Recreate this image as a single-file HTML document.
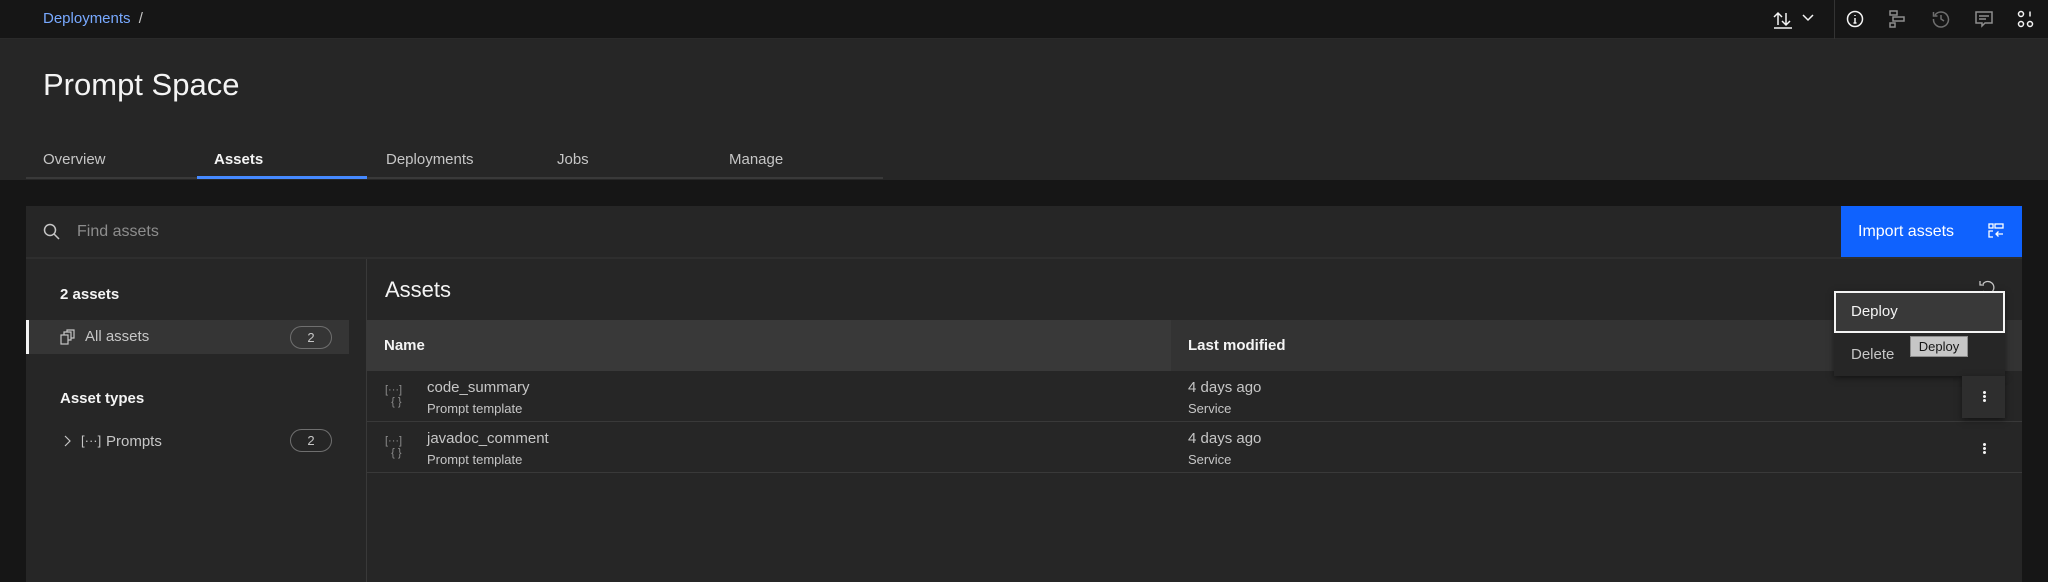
<!DOCTYPE html>
<html><head><meta charset="utf-8"><style>
*{box-sizing:border-box;margin:0;padding:0}
body{width:2048px;height:582px;background:#161616;font-family:"Liberation Sans",sans-serif;color:#f4f4f4;position:relative;overflow:hidden}
.a{position:absolute}
.ic{position:absolute;fill:none;stroke:#f4f4f4;stroke-width:1.5}
</style></head><body>
<div class="a" style="left:0;top:0;width:2048px;height:39px;background:#161616;border-bottom:1px solid #2a2a2a"></div>
<div class="a" style="left:43px;top:10px;font-size:15px;color:#78a9ff">Deployments <span style="color:#c6c6c6;margin-left:4px">/</span></div>
<div class="a" style="left:1834px;top:0;width:1px;height:39px;background:#333"></div>
<svg class="ic" style="left:1772px;top:10px" width="22" height="20" viewBox="0 0 22 20"><path d="M6 15V3M2 7l4-4 4 4M14 3v12M10 11l4 4 4-4M2 18h18"/></svg>
<svg class="ic" style="left:1802px;top:14px" width="12" height="8" viewBox="0 0 12 8"><path d="M1 1l5 5 5-5"/></svg>
<svg class="ic" style="left:1846px;top:10px" width="18" height="18" viewBox="0 0 18 18"><circle cx="9" cy="9" r="7.5"/><path d="M9 8v5M7.5 13h3M9 5v1"/></svg>
<svg class="ic" style="left:1889px;top:10px;stroke:#8d8d8d" width="18" height="18" viewBox="0 0 18 18"><rect x="1" y="1" width="7" height="4"/><rect x="4" y="7" width="11" height="4"/><rect x="1" y="13" width="5" height="4"/></svg>
<svg class="ic" style="left:1932px;top:10px;stroke:#6f6f6f" width="18" height="18" viewBox="0 0 18 18"><path d="M3 5A7.5 7.5 0 1 1 1.5 9M1.5 2v4h4M9 5v4l3 2"/></svg>
<svg class="ic" style="left:1975px;top:10px;stroke:#8d8d8d" width="18" height="18" viewBox="0 0 18 18"><path d="M1 2h16v11h-7l-3 3v-3H1zM4 6h10M4 9h7"/></svg>
<svg class="ic" style="left:2017px;top:10px" width="18" height="18" viewBox="0 0 18 18"><circle cx="4" cy="4" r="2.5"/><path d="M13 1.5v5"/><circle cx="4" cy="14" r="2.5"/><circle cx="13" cy="14" r="2.5"/></svg>

<div class="a" style="left:0;top:39px;width:2048px;height:141px;background:#262626"></div>
<div class="a" style="left:43px;top:67px;font-size:31px;color:#f4f4f4">Prompt Space</div>
<div class="a" style="left:26px;top:177px;width:857px;height:2px;background:#393939"></div>
<div class="a" style="left:197px;top:176px;width:170px;height:3px;background:#4589ff"></div>
<div class="a" style="left:43px;top:151px;font-size:15px;color:#c6c6c6">Overview</div>
<div class="a" style="left:214px;top:151px;font-size:15px;font-weight:bold">Assets</div>
<div class="a" style="left:386px;top:151px;font-size:15px;color:#c6c6c6">Deployments</div>
<div class="a" style="left:557px;top:151px;font-size:15px;color:#c6c6c6">Jobs</div>
<div class="a" style="left:729px;top:151px;font-size:15px;color:#c6c6c6">Manage</div>

<div class="a" style="left:26px;top:206px;width:1996px;height:376px;background:#262626"></div>
<div class="a" style="left:26px;top:257px;width:1996px;height:2px;background:#2e2e2e"></div>
<svg class="ic" style="left:43px;top:223px;stroke:#c6c6c6" width="18" height="18" viewBox="0 0 18 18"><circle cx="7" cy="7" r="5.5"/><path d="M11 11l5 5"/></svg>
<div class="a" style="left:77px;top:223px;font-size:16px;color:#8d8d8d">Find assets</div>
<div class="a" style="left:1841px;top:206px;width:181px;height:51px;background:#0f62fe"></div>
<div class="a" style="left:1858px;top:223px;font-size:16px;color:#fff">Import assets</div>
<svg class="ic" style="left:1988px;top:223px;stroke:#fff;stroke-width:1.3" width="16" height="16" viewBox="0 0 16 16"><rect x="1" y="1" width="4" height="4"/><rect x="7" y="1" width="8" height="4"/><path d="M5 8H1v6h4M15 11H8M10.5 8.5L8 11l2.5 2.5"/></svg>

<div class="a" style="left:366px;top:259px;width:1px;height:323px;background:#393939"></div>
<div class="a" style="left:60px;top:286px;font-size:15px;font-weight:bold">2 assets</div>
<div class="a" style="left:26px;top:320px;width:323px;height:34px;background:#353535;border-left:3px solid #f4f4f4"></div>
<svg class="ic" style="left:60px;top:329px;stroke:#c6c6c6;stroke-width:1.2" width="15" height="16" viewBox="0 0 15 16"><rect x="1" y="6" width="7" height="9"/><path d="M4 6V3h7v8H8M7 3V1h7v8h-3"/></svg>
<div class="a" style="left:85px;top:328px;font-size:15px;color:#c6c6c6">All assets</div>
<div class="a" style="left:290px;top:326px;width:42px;height:23px;border:1px solid #6f6f6f;border-radius:12px;font-size:13px;color:#c6c6c6;text-align:center;line-height:21px">2</div>
<div class="a" style="left:60px;top:390px;font-size:15px;font-weight:bold">Asset types</div>
<svg class="ic" style="left:63px;top:435px;stroke:#c6c6c6;stroke-width:1.2" width="8" height="12" viewBox="0 0 8 12"><path d="M2 1l5 5-5 5"/></svg>
<div class="a" style="left:81px;top:433px;font-size:13px;color:#c6c6c6">[···]</div>
<div class="a" style="left:106px;top:433px;font-size:15px;color:#c6c6c6">Prompts</div>
<div class="a" style="left:290px;top:429px;width:42px;height:23px;border:1px solid #6f6f6f;border-radius:12px;font-size:13px;color:#c6c6c6;text-align:center;line-height:21px">2</div>

<div class="a" style="left:385px;top:277px;font-size:22px">Assets</div>
<svg class="ic" style="left:1979px;top:280px;stroke:#c6c6c6;stroke-width:1.3" width="16" height="14" viewBox="0 0 16 14"><path d="M4 4a6 6 0 1 1 0 7M1 1v4h4"/></svg>
<div class="a" style="left:367px;top:320px;width:804px;height:51px;background:#393939"></div>
<div class="a" style="left:1171px;top:320px;width:851px;height:51px;background:#333"></div>
<div class="a" style="left:384px;top:337px;font-size:15px;font-weight:bold">Name</div>
<div class="a" style="left:1188px;top:337px;font-size:15px;font-weight:bold">Last modified</div>
<div class="a" style="left:367px;top:421px;width:1655px;height:1px;background:#393939"></div>
<div class="a" style="left:367px;top:472px;width:1655px;height:1px;background:#393939"></div>

<div class="a" style="left:385px;top:384px;font-size:11px;color:#8d8d8d;line-height:12px">[···]<br>&nbsp;&nbsp;{ }</div>
<div class="a" style="left:427px;top:379px;font-size:15px;color:#c6c6c6">code_summary</div>
<div class="a" style="left:427px;top:401px;font-size:13px;color:#c6c6c6">Prompt template</div>
<div class="a" style="left:1188px;top:379px;font-size:15px;color:#c6c6c6">4 days ago</div>
<div class="a" style="left:1188px;top:401px;font-size:13px;color:#c6c6c6">Service</div>

<div class="a" style="left:385px;top:435px;font-size:11px;color:#8d8d8d;line-height:12px">[···]<br>&nbsp;&nbsp;{ }</div>
<div class="a" style="left:427px;top:430px;font-size:15px;color:#c6c6c6">javadoc_comment</div>
<div class="a" style="left:427px;top:452px;font-size:13px;color:#c6c6c6">Prompt template</div>
<div class="a" style="left:1188px;top:430px;font-size:15px;color:#c6c6c6">4 days ago</div>
<div class="a" style="left:1188px;top:452px;font-size:13px;color:#c6c6c6">Service</div>

<div class="a" style="left:1834px;top:291px;width:171px;height:85px;background:#262626;box-shadow:0 2px 6px rgba(0,0,0,.5)"></div>
<div class="a" style="left:1834px;top:291px;width:171px;height:42px;background:#393939;border:2px solid #f4f4f4"></div>
<div class="a" style="left:1851px;top:303px;font-size:15px;color:#f4f4f4">Deploy</div>
<div class="a" style="left:1851px;top:346px;font-size:15px;color:#c6c6c6">Delete</div>
<div class="a" style="left:1910px;top:336px;width:58px;height:21px;background:#c6c6c6;border:1px solid #8d8d8d;font-size:13px;color:#161616;text-align:center;line-height:19px">Deploy</div>
<div class="a" style="left:1962px;top:376px;width:43px;height:42px;background:#2e2e2e;box-shadow:0 2px 6px rgba(0,0,0,.5)"></div>
<div class="a" style="left:1983px;top:391px;width:3px;height:3px;background:#f4f4f4;border-radius:2px;box-shadow:0 4px 0 #f4f4f4,0 8px 0 #f4f4f4"></div>
<div class="a" style="left:1983px;top:443px;width:3px;height:3px;background:#f4f4f4;border-radius:2px;box-shadow:0 4px 0 #f4f4f4,0 8px 0 #f4f4f4"></div>
</body></html>
